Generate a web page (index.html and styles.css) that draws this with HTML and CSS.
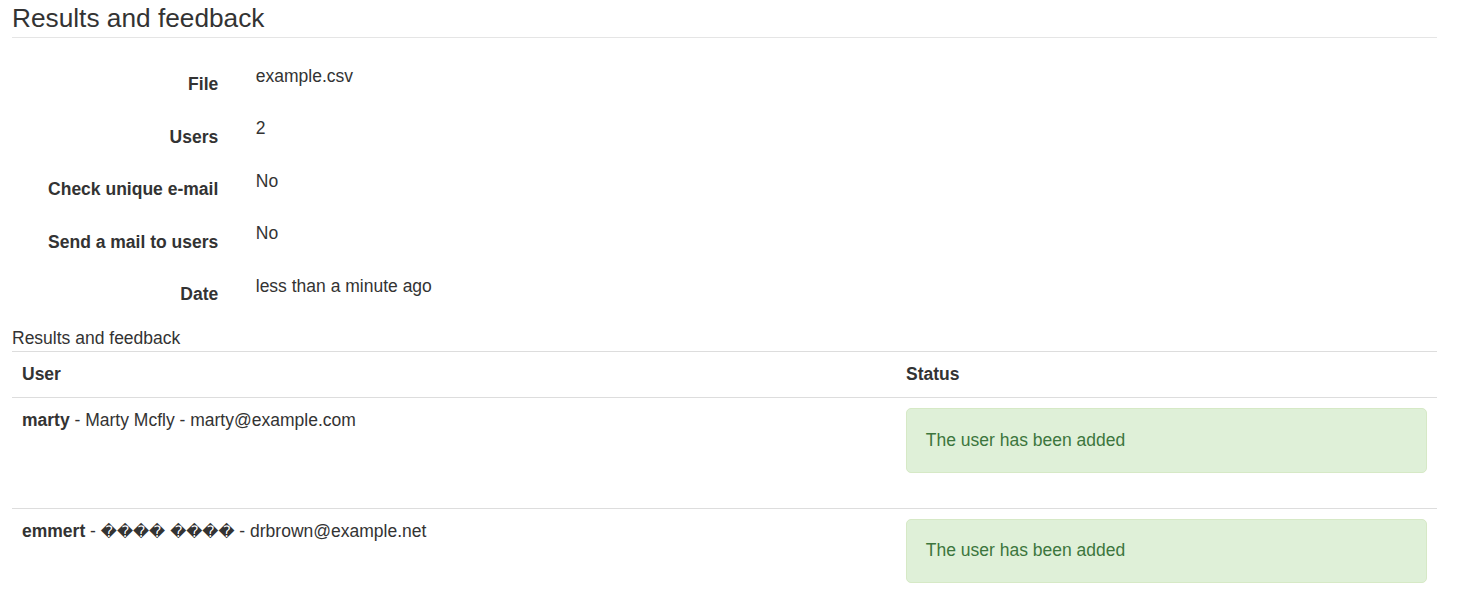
FILE: index.html
```html
<!DOCTYPE html>
<html lang="en">
<head>
<meta charset="utf-8">
<title>Results and feedback</title>
<link rel="stylesheet" href="styles.css">
</head>
<body>
<div class="page">
  <div class="legend">Results and feedback</div>
  <div class="details">
    <div class="group">
      <div class="label">File</div>
      <div class="value">example.csv</div>
    </div>
    <div class="group">
      <div class="label">Users</div>
      <div class="value">2</div>
    </div>
    <div class="group">
      <div class="label">Check unique e-mail</div>
      <div class="value">No</div>
    </div>
    <div class="group">
      <div class="label">Send a mail to users</div>
      <div class="value">No</div>
    </div>
    <div class="group">
      <div class="label">Date</div>
      <div class="value">less than a minute ago</div>
    </div>
  </div>
  <div class="caption">Results and feedback</div>
  <table class="results">
    <thead>
      <tr>
        <th class="col-user">User</th>
        <th class="col-status">Status</th>
      </tr>
    </thead>
    <tbody>
      <tr>
        <td><strong>marty</strong> - Marty Mcfly - marty@example.com</td>
        <td><div class="alert">The user has been added</div></td>
      </tr>
      <tr>
        <td><strong>emmert</strong> - <span class="bad">���� ����</span> - drbrown@example.net</td>
        <td><div class="alert">The user has been added</div></td>
      </tr>
    </tbody>
  </table>
</div>
</body>
</html>
```

FILE: styles.css
```css
html, body {
  margin: 0;
  padding: 0;
  background: #fff;
}

body {
  font-family: "Liberation Sans", Arial, Helvetica, sans-serif;
  font-size: 17.5px;
  line-height: 25px;
  color: #333;
}

.page {
  width: 1425px;
  padding: 0 12px;
}

.legend {
  font-size: 26.25px;
  line-height: 37px;
  border-bottom: 1px solid #e5e5e5;
  margin-bottom: 25.5px;
}

.details {
  display: flex;
  flex-direction: column;
}

.group {
  display: flex;
  margin-bottom: 18.75px;
}

.label {
  width: 206.25px;
  flex: none;
  text-align: right;
  font-weight: bold;
  padding-top: 8.75px;
}

.value {
  margin-left: 37.5px;
}

.caption {
  line-height: 25px;
}

.results {
  width: 1425px;
  border-collapse: collapse;
  border-spacing: 0;
}

.results th,
.results td {
  padding: 10px;
  text-align: left;
  vertical-align: top;
  border-top: 1px solid #ddd;
  line-height: 25px;
}

.results th {
  font-weight: bold;
  border-bottom: 1px solid #ddd;
}

.col-user {
  width: 864px;
}

.alert {
  padding: 18.75px;
  margin-bottom: 25px;
  border: 1px solid #d6e9c6;
  border-radius: 5px;
  background: #dff0d8;
  color: #3c763d;
}

.bad {
  font-family: "DejaVu Sans", sans-serif;
  font-size: 15.7px;
}
```
